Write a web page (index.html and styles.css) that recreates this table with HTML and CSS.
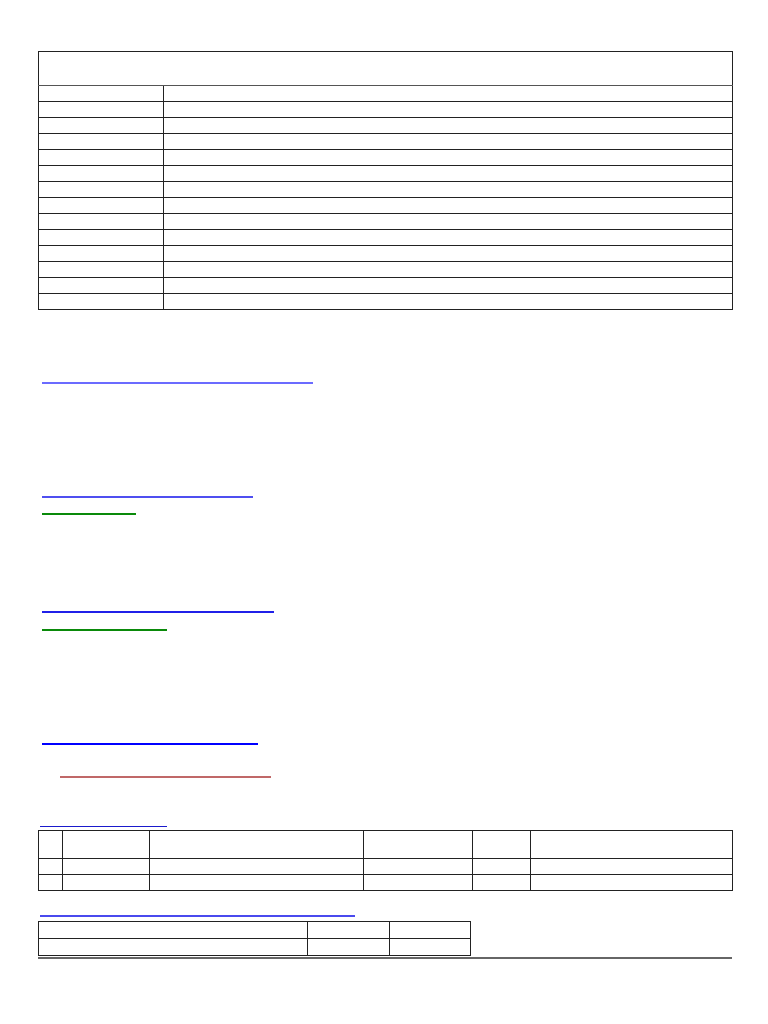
FILE: index.html
```html
<!DOCTYPE html>
<html>
<head>
<meta charset="utf-8">
<link rel="stylesheet" href="styles.css">
</head>
<body>
<div class="page">
  <table class="grid t1">
    <colgroup><col class="c1a"><col></colgroup>
    <tr class="head"><td colspan="2"></td></tr>
    <tr><td></td><td></td></tr>
    <tr><td></td><td></td></tr>
    <tr><td></td><td></td></tr>
    <tr><td></td><td></td></tr>
    <tr><td></td><td></td></tr>
    <tr><td></td><td></td></tr>
    <tr><td></td><td></td></tr>
    <tr><td></td><td></td></tr>
    <tr><td></td><td></td></tr>
    <tr><td></td><td></td></tr>
    <tr><td></td><td></td></tr>
    <tr><td></td><td></td></tr>
    <tr><td></td><td></td></tr>
    <tr><td></td><td></td></tr>
  </table>

  <a class="ln ln1" href="#"></a>
  <a class="ln ln2" href="#"></a>
  <a class="ln ln3" href="#"></a>
  <a class="ln ln4" href="#"></a>
  <a class="ln ln5" href="#"></a>
  <a class="ln ln6" href="#"></a>
  <a class="ln ln7" href="#"></a>
  <a class="ln ln8" href="#"></a>

  <table class="grid t2">
    <colgroup>
      <col class="c2a"><col class="c2b"><col class="c2c"><col class="c2d"><col class="c2e"><col>
    </colgroup>
    <tr class="head"><td></td><td></td><td></td><td></td><td></td><td></td></tr>
    <tr><td></td><td></td><td></td><td></td><td></td><td></td></tr>
    <tr><td></td><td></td><td></td><td></td><td></td><td></td></tr>
  </table>

  <a class="ln ln9" href="#"></a>

  <table class="grid t3">
    <colgroup><col class="c3a"><col class="c3b"><col></colgroup>
    <tr><td></td><td></td><td></td></tr>
    <tr><td></td><td></td><td></td></tr>
  </table>

  <div class="rule"></div>
</div>
</body>
</html>
```

FILE: styles.css
```css
html, body {
  margin: 0;
  padding: 0;
  background: #ffffff;
  font-family: "Liberation Sans", Arial, sans-serif;
  font-size: 10px;
}

.page {
  padding: 51px 36px 40px 38px;
}

.grid {
  border-collapse: collapse;
  table-layout: fixed;
  border: 1px solid #444444;
}

.grid td {
  padding: 0;
  border: 1px solid #222222;
  height: 15px;
  line-height: 0;
}

.t1 { width: 695px; }
.t1 .head td { height: 33px; border-bottom-color: #555555; }
.c1a { width: 125px; }

.t2 { width: 695px; margin-top: 3px; }
.t2 .head td { height: 27px; }
.c2a { width: 24px; }
.c2b { width: 87px; }
.c2c { width: 214px; }
.c2d { width: 109px; }
.c2e { width: 58px; }

.t3 { width: 433px; margin-top: 4px; }
.t3 td { height: 16px; }
.c3a { width: 269px; }
.c3b { width: 82px; }

.ln {
  display: block;
  height: 0;
  border-bottom: 2px solid #0000ff;
  margin-left: 4px;
}

.ln1 { width: 271px; margin-top: 72px; border-bottom-color: #6b6bff; }
.ln2 { width: 211px; margin-top: 112px; border-bottom-color: #4f4ff0; }
.ln3 { width: 94px; margin-top: 15px; border-bottom-color: #0a8a0a; }
.ln4 { width: 232px; margin-top: 96px; border-bottom-color: #2020e8; }
.ln5 { width: 125px; margin-top: 16px; border-bottom-color: #0a8a0a; }
.ln6 { width: 216px; margin-top: 112px; border-bottom-color: #0000ff; }
.ln7 { width: 211px; margin-top: 31px; margin-left: 22px; border-bottom-color: #c06868; }
.ln8 { width: 127px; margin-top: 48px; margin-left: 2px; border-bottom: 1px solid #1a1acc; }
.ln9 { width: 315px; margin-top: 24px; margin-left: 2px; border-bottom-color: #4a4aee; }

.rule {
  width: 694px;
  height: 0;
  margin-top: 1px;
  border-top: 2px solid #666666;
}
```
